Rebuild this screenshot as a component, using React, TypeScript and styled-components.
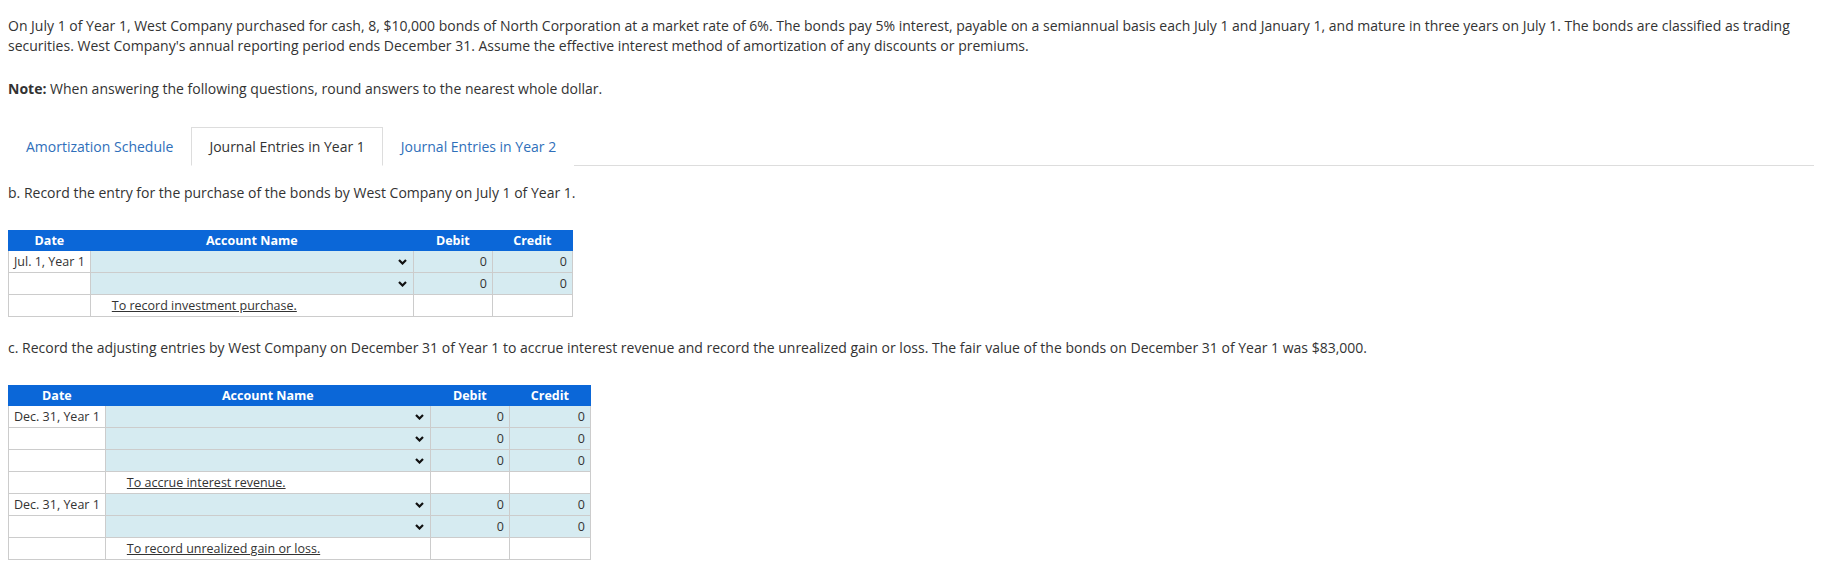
import React from "react";
import styled, { createGlobalStyle } from "styled-components";

const GlobalStyle = createGlobalStyle`
  body {
    margin: 8px;
    background: #fff;
    font-family: "Open Sans", "Liberation Sans", Arial, sans-serif;
    font-size: 14px;
    line-height: 20px;
    color: #333;
  }
`;

const Para = styled.p<{ $top: number }>`
  margin: ${(p) => p.$top}px 0 0;
`;

const TabBar = styled.div`
  display: flex;
  margin-top: 28px;
  height: 38px;
  border-bottom: 1px solid #ddd;
`;

const Tab = styled.div<{ $active?: boolean }>`
  display: flex;
  align-items: center;
  box-sizing: border-box;
  height: 39px;
  margin-bottom: -1px;
  padding: 0 17px;
  color: ${(p) => (p.$active ? "#333" : "#2f6fba")};
  background: #fff;
  border: 1px solid ${(p) => (p.$active ? "#ddd" : "transparent")};
  border-bottom-color: ${(p) => (p.$active ? "#fff" : "transparent")};
  cursor: pointer;
`;

const Journal = styled.table<{ $top: number }>`
  margin-top: ${(p) => p.$top}px;
  border-collapse: collapse;
  table-layout: fixed;
  font-size: 12.5px;
  line-height: 16px;
`;

const HeadCell = styled.th<{ $w: number }>`
  width: ${(p) => p.$w}px;
  height: 19px;
  padding: 0 5px;
  background: #0b67d8;
  color: #fff;
  font-weight: 700;
  text-align: center;
  border: 1px solid #0b67d8;
`;

const Cell = styled.td<{ $input?: boolean; $num?: boolean }>`
  height: 21px;
  padding: 0 5px;
  border: 1px solid #ccc;
  background: ${(p) => (p.$input ? "#d6ebf1" : "#fff")};
  text-align: ${(p) => (p.$num ? "right" : "left")};
  white-space: nowrap;
  vertical-align: middle;
`;

const SelectBox = styled.div`
  display: flex;
  justify-content: flex-end;
  align-items: center;
  padding-right: 1px;
`;

const Memo = styled.span`
  display: inline-block;
  padding-left: 16px;
  text-decoration: underline;
  color: #333;
`;

type Widths = [number, number, number, number];

const Chevron = () => (
  <svg width="9" height="6" viewBox="0 0 9 6">
    <polyline points="1,1 4.5,4.5 8,1" fill="none" stroke="#111" strokeWidth="2.2" />
  </svg>
);

const EntryRow = ({ date }: { date?: string }) => (
  <tr>
    <Cell>{date}</Cell>
    <Cell $input>
      <SelectBox>
        <Chevron />
      </SelectBox>
    </Cell>
    <Cell $input $num>0</Cell>
    <Cell $input $num>0</Cell>
  </tr>
);

const MemoRow = ({ text }: { text: string }) => (
  <tr>
    <Cell />
    <Cell>
      <Memo>{text}</Memo>
    </Cell>
    <Cell />
    <Cell />
  </tr>
);

const JournalTable = ({
  widths,
  top,
  children,
}: {
  widths: Widths;
  top: number;
  children: React.ReactNode;
}) => (
  <Journal $top={top}>
    <thead>
      <tr>
        <HeadCell $w={widths[0]}>Date</HeadCell>
        <HeadCell $w={widths[1]}>Account Name</HeadCell>
        <HeadCell $w={widths[2]}>Debit</HeadCell>
        <HeadCell $w={widths[3]}>Credit</HeadCell>
      </tr>
    </thead>
    <tbody>{children}</tbody>
  </Journal>
);

export default function App() {
  return (
    <>
      <GlobalStyle />
      <Para $top={8}>
        On July 1 of Year 1, West Company purchased for cash, 8, $10,000 bonds of North Corporation at a
        market rate of 6%. The bonds pay 5% interest, payable on a semiannual basis each July 1 and
        January 1, and mature in three years on July 1. The bonds are classified as trading
        <br />
        securities. West Company's annual reporting period ends December 31. Assume the effective
        interest method of amortization of any discounts or premiums.
      </Para>
      <Para $top={23}>
        <strong>Note:</strong> When answering the following questions, round answers to the nearest
        whole dollar.
      </Para>

      <TabBar>
        <Tab>Amortization Schedule</Tab>
        <Tab $active>Journal Entries in Year 1</Tab>
        <Tab>Journal Entries in Year 2</Tab>
      </TabBar>

      <Para $top={17}>b. Record the entry for the purchase of the bonds by West Company on July 1 of Year 1.</Para>

      <JournalTable widths={[67, 312, 68, 69]} top={27}>
        <EntryRow date="Jul. 1, Year 1" />
        <EntryRow />
        <MemoRow text="To record investment purchase." />
      </JournalTable>

      <Para $top={21}>
        c. Record the adjusting entries by West Company on December 31 of Year 1 to accrue interest
        revenue and record the unrealized gain or loss. The fair value of the bonds on December 31 of
        Year 1 was $83,000.
      </Para>

      <JournalTable widths={[82, 314, 68, 70]} top={27}>
        <EntryRow date="Dec. 31, Year 1" />
        <EntryRow />
        <EntryRow />
        <MemoRow text="To accrue interest revenue." />
        <EntryRow date="Dec. 31, Year 1" />
        <EntryRow />
        <MemoRow text="To record unrealized gain or loss." />
      </JournalTable>
    </>
  );
}
